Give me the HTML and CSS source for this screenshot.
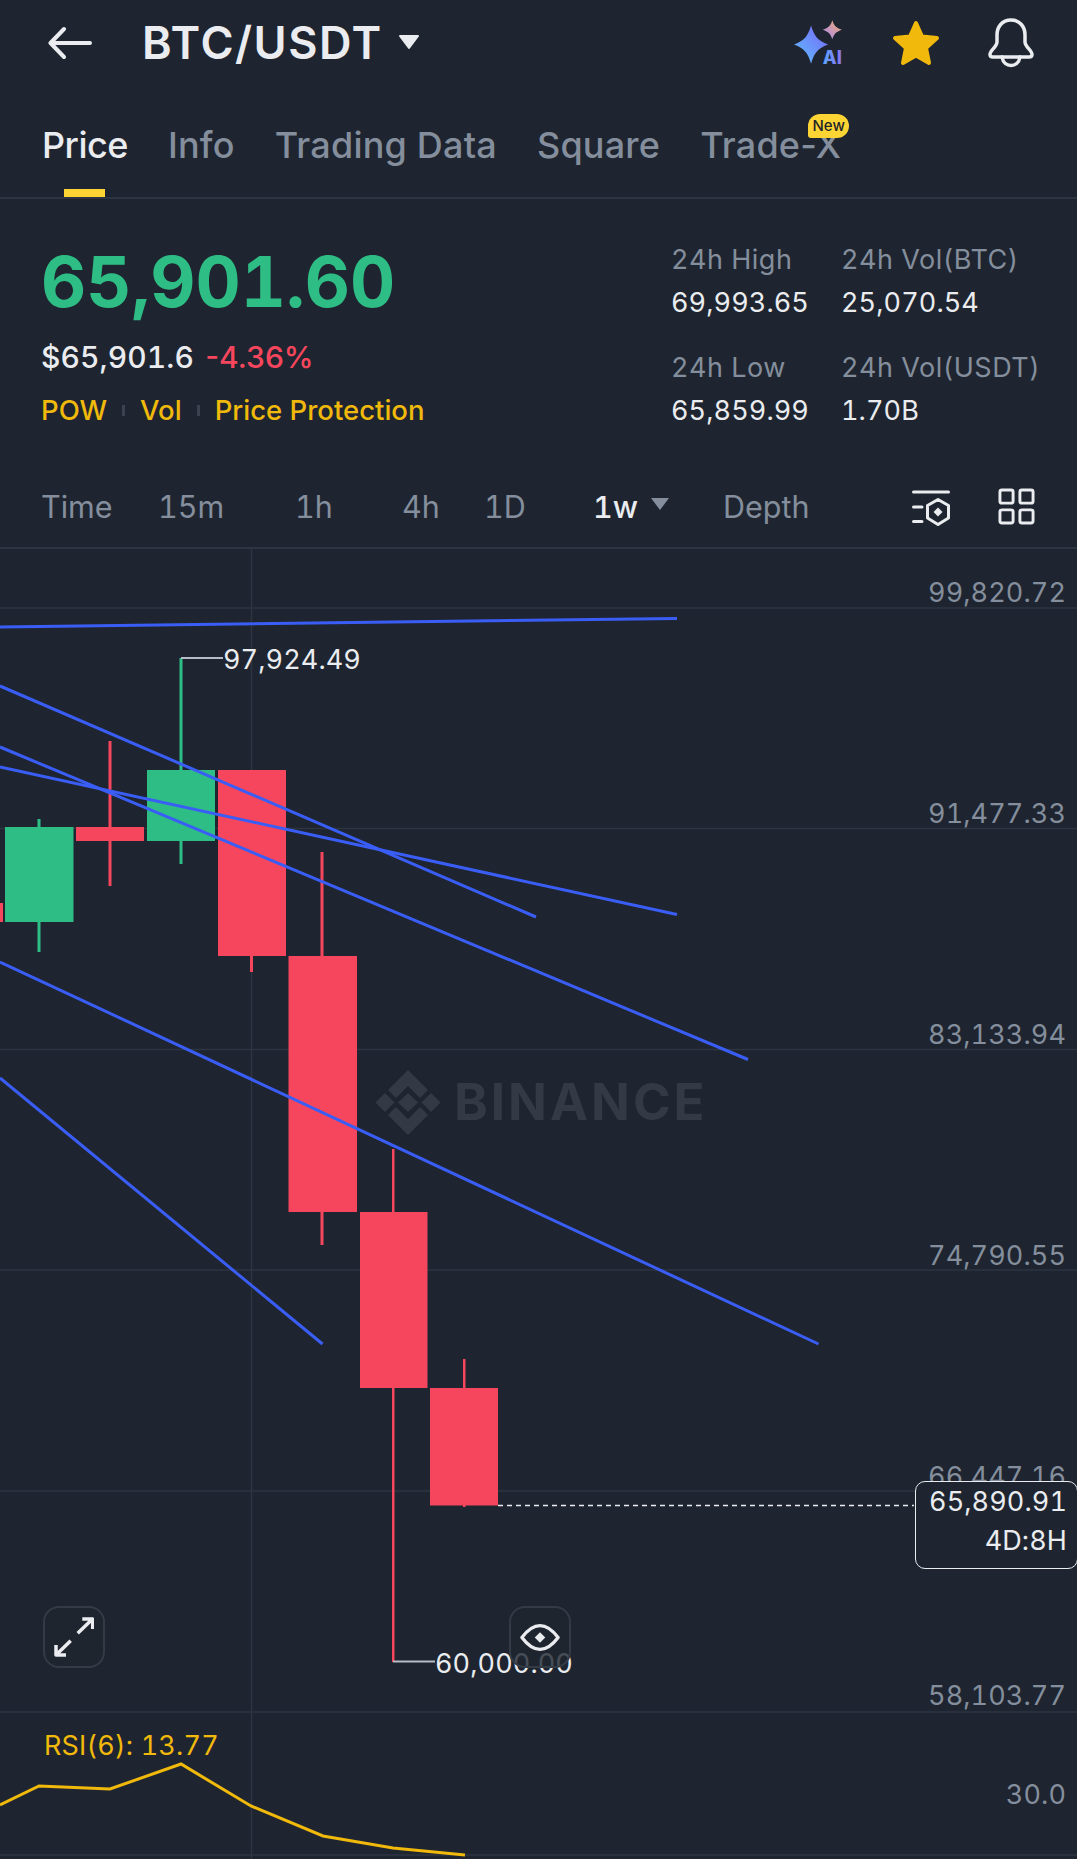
FILE: index.html
```html
<!DOCTYPE html>
<html lang="en">
<head>
    <meta charset="UTF-8">
    <meta name="viewport" content="width=device-width, initial-scale=1.0">
    <title>BTC/USDT</title>
    <link rel="stylesheet" href="styles.css">
</head>
<body>
    <div class="screen">
        <!-- Top bar -->
        <header class="topbar">
            <svg class="back" viewBox="0 0 44 34" aria-hidden="true">
                <path d="M42 17H3M16 3L2.500 17L16 31"/>
            </svg>
            <span class="pair">BTC/USDT</span>
            <svg class="caret" viewBox="0 0 24 16" aria-hidden="true">
                <path d="M3 2H21L12 14Z"/>
            </svg>
            <svg class="ai-icon" viewBox="0 0 48 44" aria-hidden="true">
                <defs>
                    <linearGradient id="sparkBig" x1="0" y1="1" x2="1" y2="0">
                        <stop offset="0" stop-color="#5CC1FF"/>
                        <stop offset="1" stop-color="#7A63F5"/>
                    </linearGradient>
                    <linearGradient id="sparkSmall" x1="0" y1="1" x2="1" y2="0">
                        <stop offset="0" stop-color="#A78BFA"/>
                        <stop offset="1" stop-color="#F5A96B"/>
                    </linearGradient>
                    <linearGradient id="aiText" x1="0" y1="0" x2="1" y2="0">
                        <stop offset="0" stop-color="#5AA5FF"/>
                        <stop offset="1" stop-color="#8B74F0"/>
                    </linearGradient>
                </defs>
                <path fill="url(#sparkBig)" d="M17 5C20 15 23 19 33 23C23 27 20 31 17 41C14 31 11 27 1 23C11 19 14 15 17 5Z"/>
                <path fill="url(#sparkSmall)" d="M37 0C38.500 5 40.500 7 46 9C40.500 11 38.500 13 37 18C35.500 13 33.500 11 28 9C33.500 7 35.500 5 37 0Z"/>
                <text class="ai-text" x="28" y="41">AI</text>
            </svg>
            <svg class="star" viewBox="0 0 48 46" aria-hidden="true">
                <path d="M24 3L30 16.500L45 18L34 28L37 43L24 35.500L11 43L14 28L3 18L18 16.500Z"/>
            </svg>
            <svg class="bell" viewBox="0 0 46 50" aria-hidden="true">
                <path d="M23 2C14 2 9 9 9 17V24C9 29 2 32 2 36.500C2 38.500 3 39 5 39H41C43 39 44 38.500 44 36.500C44 32 37 29 37 24V17C37 9 32 2 23 2Z"/>
                <path d="M14 39C15 45 19 47.500 23 47.500C27 47.500 31 45 32 39"/>
            </svg>
        </header>

        <!-- Tabs -->
        <nav class="tabs">
            <span class="tab active">Price</span>
            <span class="tab">Info</span>
            <span class="tab">Trading Data</span>
            <span class="tab">Square</span>
            <span class="tab">Trade-X<span class="new-badge">New</span></span>
        </nav>

        <!-- Price summary -->
        <section class="quote">
            <div class="quote-main">
                <div class="last-price">65,901.60</div>
                <div class="sub-price">$65,901.6 <span class="change">-4.36%</span></div>
                <div class="tags">
                    <span>POW</span><i class="tag-sep"></i><span>Vol</span><i class="tag-sep"></i><span>Price Protection</span>
                </div>
            </div>
            <div class="stats">
                <div class="stat"><div class="stat-label">24h High</div><div class="stat-value">69,993.65</div></div>
                <div class="stat"><div class="stat-label">24h Vol(BTC)</div><div class="stat-value">25,070.54</div></div>
                <div class="stat"><div class="stat-label">24h Low</div><div class="stat-value">65,859.99</div></div>
                <div class="stat"><div class="stat-label">24h Vol(USDT)</div><div class="stat-value">1.70B</div></div>
            </div>
        </section>

        <!-- Intervals -->
        <div class="intervals">
            <span>Time</span>
            <span>15m</span>
            <span>1h</span>
            <span>4h</span>
            <span>1D</span>
            <span class="current">1w<svg class="mini-caret" viewBox="0 0 20 14" aria-hidden="true"><path d="M1 1H19L10 13Z"/></svg></span>
            <span>Depth</span>
            <svg class="tool-icon" viewBox="0 0 38 40" aria-hidden="true">
                <path d="M1.500 2H36.500M1.500 17H10M1.500 31.500H10"/>
                <path d="M26 9.500L36.500 15.500V28L26 34.500L15.500 28V15.500Z"/>
                <path class="solid" d="M26 17.500L30.500 22L26 26.500L21.500 22Z"/>
            </svg>
            <svg class="tool-icon grid-icon" viewBox="0 0 38 38" aria-hidden="true">
                <rect x="2" y="2" width="13.500" height="13.500" rx="2"/>
                <rect x="22.500" y="2" width="13.500" height="13.500" rx="2"/>
                <rect x="2" y="22.500" width="13.500" height="13.500" rx="2"/>
                <rect x="22.500" y="22.500" width="13.500" height="13.500" rx="2"/>
            </svg>
        </div>

        <!-- Chart -->
        <div class="chart">
            <svg class="chart-canvas" viewBox="0 549 1077 1310">
                <g class="grid">
                    <path d="M0 608H1077M0 828.500H1077M0 1049.500H1077M0 1270H1077M0 1491H1077M0 1712H1077M0 1855H1077"/>
                    <path d="M251.500 549V1859"/>
                </g>

                <g class="watermark">
                    <path d="M408 1070L428 1090L420 1098L408 1086L396 1098L388 1090Z"/>
                    <path d="M408 1135L428 1115L420 1107L408 1119L396 1107L388 1115Z"/>
                    <path d="M408 1093L418 1102.500L408 1112L398 1102.500Z"/>
                    <path d="M385 1093L394.500 1102.500L385 1112L375.500 1102.500Z"/>
                    <path d="M431 1093L440.500 1102.500L431 1112L421.500 1102.500Z"/>
                    <text class="watermark-text" x="454" y="1120">BINANCE</text>
                </g>

                <!-- Candles -->
                <g class="up">
                    <rect x="37.500" y="819" width="3" height="133"/>
                    <rect x="5" y="827" width="68.500" height="95"/>
                    <rect x="179.500" y="658" width="3" height="206"/>
                    <rect x="147" y="770" width="68" height="71"/>
                </g>
                <g class="down">
                    <rect x="0" y="903" width="3" height="19"/>
                    <rect x="108.500" y="741" width="3" height="145"/>
                    <rect x="76" y="827" width="68" height="14"/>
                    <rect x="250" y="770" width="3" height="202"/>
                    <rect x="218" y="770" width="68" height="186"/>
                    <rect x="320.500" y="852" width="3" height="393"/>
                    <rect x="288.500" y="956" width="68.500" height="256"/>
                    <rect x="392" y="1149" width="2.500" height="513"/>
                    <rect x="360" y="1212" width="67.500" height="176"/>
                    <rect x="463" y="1359" width="2.500" height="148"/>
                    <rect x="430" y="1388" width="68" height="117.500"/>
                </g>

                <!-- Trend lines -->
                <g class="trend">
                    <path d="M0 627L677 618.500"/>
                    <path d="M0 686L536 917"/>
                    <path d="M0 767L677 914.500"/>
                    <path d="M0 747L748 1059.500"/>
                    <path d="M0 962L818.500 1344"/>
                    <path d="M0 1078L322.500 1344"/>
                </g>

                <!-- RSI -->
                <polyline class="rsi-line" points="0,1805 39,1786 110,1789 181,1764 251,1806 323,1836 393,1848 465,1855"/>

                <!-- High / low marks -->
                <path class="mark-line" d="M181 658H223M393 1661.500H435"/>
                <text class="mark" x="223" y="669">97,924.49</text>
                <text class="mark" x="435" y="1673">60,000.00</text>

                <!-- Price axis -->
                <g class="axis">
                    <text x="1066" y="602">99,820.72</text>
                    <text x="1066" y="823">91,477.33</text>
                    <text x="1066" y="1044">83,133.94</text>
                    <text x="1066" y="1265">74,790.55</text>
                    <text x="1066" y="1486">66,447.16</text>
                    <text x="1066" y="1705">58,103.77</text>
                    <text x="1066" y="1804">30.0</text>
                </g>

                <path class="price-dash" d="M498 1505.500H914"/>
            </svg>

            <div class="rsi-label">RSI(6): 13.77</div>

            <div class="price-tag">
                <div>65,890.91</div>
                <div>4D:8H</div>
            </div>

            <button class="chart-btn btn-expand" aria-label="Fullscreen">
                <svg viewBox="0 0 40 40" aria-hidden="true">
                    <path d="M23.700 16.300L38 2.500M28.300 2H38.700V12M16.700 23.700L2.500 37.500M2 28V38H12"/>
                </svg>
            </button>
            <button class="chart-btn btn-eye" aria-label="Toggle">
                <svg viewBox="0 0 42 30" aria-hidden="true">
                    <path d="M2 15C8 7 14 2.500 21 2.500C28 2.500 34 7 40 15C34 23 28 27.500 21 27.500C14 27.500 8 23 2 15Z"/>
                    <path class="solid" d="M21 9.500L26.500 15L21 20.500L15.500 15Z"/>
                </svg>
            </button>
        </div>
    </div>
</body>
</html>
```

FILE: styles.css
```css
body {
    margin: 0;
    padding: 0;
    background-color: #1E2530;
    font-family: Inter, "Liberation Sans", sans-serif;
    font-variant-numeric: tabular-nums;
    color: #EAECEF;
}

.screen {
    width: 1077px;
    height: 1859px;
    overflow: hidden;
}

/* Top bar */
.topbar {
    height: 86px;
    display: flex;
    align-items: center;
    padding: 0 43px 0 48px;
}

.back {
    width: 44px;
    height: 34px;
    margin-right: 50px;
}

.back path {
    fill: none;
    stroke: #EAECEF;
    stroke-width: 4;
    stroke-linecap: round;
    stroke-linejoin: round;
}

.pair {
    font-size: 45px;
    font-weight: 600;
    letter-spacing: 1.5px;
    line-height: 52px;
}

.caret {
    width: 24px;
    height: 16px;
    margin-left: 14px;
    margin-top: -2px;
}

.caret path {
    fill: #EAECEF;
    stroke: #EAECEF;
    stroke-width: 2;
    stroke-linejoin: round;
}

.ai-icon {
    width: 51px;
    height: 47px;
    margin-left: auto;
    margin-right: 48px;
}

.ai-text {
    font-size: 17px;
    font-weight: 800;
    fill: url(#aiText);
}

.star {
    width: 48px;
    height: 46px;
    margin-right: 48px;
}

.star path {
    fill: #F0B90B;
    stroke: #F0B90B;
    stroke-width: 4;
    stroke-linejoin: round;
}

.bell {
    width: 46px;
    height: 50px;
}

.bell path {
    fill: none;
    stroke: #EAECEF;
    stroke-width: 3.5;
    stroke-linejoin: round;
    stroke-linecap: round;
}

/* Tabs */
.tabs {
    height: 111px;
    display: flex;
    gap: 40px;
    padding-left: 42px;
    border-bottom: 2px solid #2E3542;
}

.tab {
    position: relative;
    height: 111px;
    line-height: 118px;
    font-size: 36px;
    font-weight: 500;
    font-variant-numeric: normal;
    letter-spacing: 0.2px;
    color: #848E9C;
}

.tab.active {
    color: #EAECEF;
    letter-spacing: -0.5px;
}

.tab.active::after {
    content: "";
    position: absolute;
    left: 22px;
    bottom: 0;
    width: 41px;
    height: 8px;
    background-color: #FCD535;
}

.new-badge {
    position: absolute;
    top: 28px;
    right: -8px;
    width: 41px;
    height: 24px;
    border-radius: 12px 12px 12px 3px;
    background-color: #FCD535;
    color: #1E2329;
    font-size: 15px;
    font-weight: 500;
    letter-spacing: 0;
    line-height: 24px;
    text-align: center;
}

/* Price summary */
.quote {
    height: 271px;
    display: flex;
}

.quote-main {
    flex: 1;
    padding-left: 41px;
    padding-top: 43px;
}

.last-price {
    font-size: 70px;
    font-weight: 700;
    line-height: 80px;
    color: #2EBD85;
}

.sub-price {
    margin-top: 17px;
    font-size: 30px;
    font-weight: 500;
    letter-spacing: 0.1px;
    line-height: 36px;
}

.change {
    color: #F6465D;
    margin-left: 3px;
    font-variant-numeric: normal;
    letter-spacing: 0;
}

.tags {
    margin-top: 17px;
    display: flex;
    align-items: center;
    font-size: 27.500px;
    font-weight: 500;
    line-height: 36px;
    color: #F0B90B;
}

.tag-sep {
    width: 3px;
    height: 11px;
    margin: 0 15px;
    background-color: #3A4250;
}

.stats {
    width: 406px;
    padding-top: 40px;
    display: grid;
    grid-template-columns: 170px 1fr;
    grid-auto-rows: 85px;
    row-gap: 23px;
    font-size: 27px;
    letter-spacing: 0.5px;
    line-height: 42px;
}

.stat-label {
    color: #848E9C;
}

.stat-value {
    margin-top: 1px;
    letter-spacing: 0.1px;
    color: #EAECEF;
}

/* Intervals */
.intervals {
    height: 73px;
    padding-bottom: 4px;
    display: grid;
    grid-template-columns: 117px 137px 107px 82px 109px 130px 189px 86px 37px;
    align-items: center;
    padding-left: 41px;
    border-bottom: 2px solid #2E3542;
    font-size: 30.500px;
    color: #848E9C;
}

.intervals .current {
    display: flex;
    align-items: center;
    color: #EAECEF;
    font-weight: 500;
}

.mini-caret {
    width: 20px;
    height: 14px;
    margin-left: 12px;
    margin-top: -6px;
}

.mini-caret path {
    fill: #848E9C;
}

.tool-icon {
    width: 38px;
    height: 40px;
    margin-top: 6px;
}

.grid-icon {
    width: 37px;
    height: 37px;
    margin-top: 0;
}

.tool-icon path,
.tool-icon rect {
    fill: none;
    stroke: #EAECEF;
    stroke-width: 3;
    stroke-linecap: round;
    stroke-linejoin: round;
}

.tool-icon .solid {
    fill: #EAECEF;
    stroke: none;
}

/* Chart */
.chart {
    position: relative;
    height: 1310px;
    overflow: hidden;
}

.chart-canvas {
    display: block;
    width: 1077px;
    height: 1310px;
}

.grid path {
    fill: none;
    stroke: #2E3542;
    stroke-width: 1.5;
}

.watermark path {
    fill: #343A45;
}

.watermark-text {
    font-size: 51px;
    font-weight: 700;
    letter-spacing: 3px;
    fill: #343A45;
}

.up rect {
    fill: #2EBD85;
}

.down rect {
    fill: #F6465D;
}

.trend path {
    fill: none;
    stroke: #3A5EF5;
    stroke-width: 3;
}

.rsi-line {
    fill: none;
    stroke: #F0B90B;
    stroke-width: 3;
}

.mark-line {
    fill: none;
    stroke: #B7BDC6;
    stroke-width: 2;
}

.mark {
    font-size: 27px;
    letter-spacing: 0.1px;
    fill: #EAECEF;
}

.axis text {
    font-size: 27px;
    letter-spacing: 0.1px;
    fill: #848E9C;
    text-anchor: end;
}

.price-dash {
    fill: none;
    stroke: #EAECEF;
    stroke-width: 1.5;
    stroke-dasharray: 5 4;
}

.rsi-label {
    position: absolute;
    left: 44px;
    top: 1178px;
    font-size: 27px;
    letter-spacing: 0.2px;
    line-height: 38px;
    color: #F0B90B;
}

.price-tag {
    position: absolute;
    left: 915px;
    top: 932px;
    width: 151px;
    height: 86px;
    padding-right: 10px;
    border: 1.5px solid #EAECEF;
    border-radius: 10px;
    background-color: #1E2530;
    font-size: 27px;
    letter-spacing: 0.1px;
    line-height: 39px;
    text-align: right;
    color: #EAECEF;
}

.chart-btn {
    position: absolute;
    top: 1057px;
    width: 62px;
    height: 62px;
    padding: 0;
    display: flex;
    justify-content: center;
    align-items: center;
    border: 2px solid #333B47;
    border-radius: 16px;
    background-color: rgba(30, 37, 48, 0.8);
}

.btn-expand {
    left: 43px;
}

.btn-eye {
    left: 509px;
}

.btn-expand svg {
    width: 40px;
    height: 40px;
}

.btn-eye svg {
    width: 40px;
    height: 29px;
}

.chart-btn path {
    fill: none;
    stroke: #EAECEF;
    stroke-width: 3.5;
    stroke-linejoin: round;
}

.chart-btn .solid {
    fill: #EAECEF;
    stroke: none;
}
```
